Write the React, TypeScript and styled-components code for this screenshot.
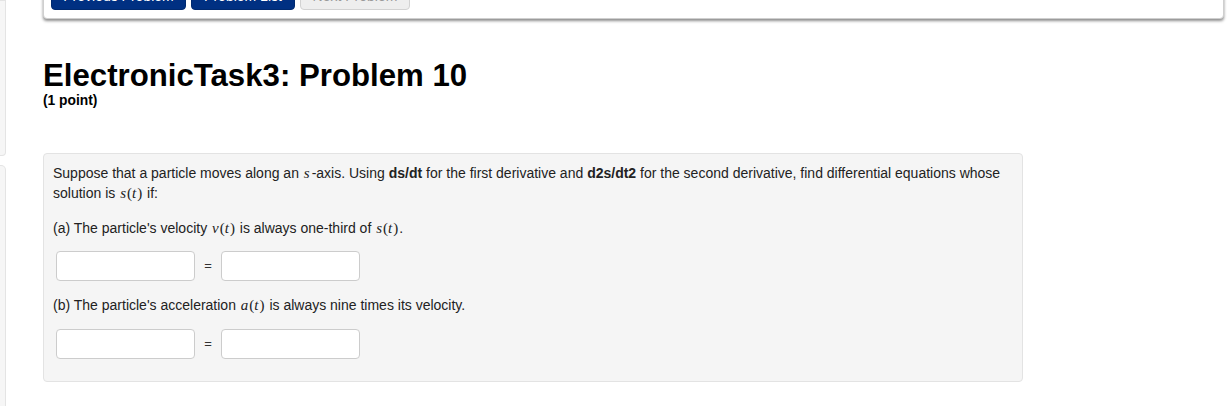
import React from 'react';
import styled, { createGlobalStyle } from 'styled-components';

const GlobalStyle = createGlobalStyle`
	html, body {
		margin: 0;
		padding: 0;
		background: #ffffff;
		overflow: hidden;
	}
	body {
		font-family: "Liberation Sans", Arial, Helvetica, sans-serif;
		color: #222222;
	}
`;

const Page = styled.div`
	display: flex;
	align-items: flex-start;
	width: 1229px;
	height: 406px;
	overflow: hidden;
`;

const Sidebar = styled.div`
	width: 6px;
	display: flex;
	flex-direction: column;
	gap: 9px;
	flex-shrink: 0;
`;

const SidePanel = styled.div<{ h: number; top?: boolean }>`
	height: ${({ h }) => `${h}px`};
	background: #f6f6f6;
	border: 1px solid #e4e4e4;
	border-left: none;
	border-radius: ${({ top }) => (top ? '0 0 4px 0' : '0 5px 0 0')};
	box-sizing: border-box;
`;

const Main = styled.div`
	margin-left: 37px;
	width: 1181px;
	flex-shrink: 0;
`;

const Nav = styled.div`
	margin-top: -30px;
	background: #ffffff;
	border: 1px solid #cfcfcf;
	border-radius: 4px;
	box-shadow: 0 2px 3px rgba(0, 0, 0, 0.45);
	padding: 9px 7px 8px;
	display: flex;
	gap: 5px;
`;

const NavButton = styled.button<{ w: number; disabled?: boolean }>`
	width: ${({ w }) => `${w}px`};
	height: 30px;
	border-radius: 4px;
	font-family: "Liberation Sans", Arial, sans-serif;
	font-size: 14px;
	line-height: 30px;
	padding: 0;
	background: ${({ disabled }) => (disabled ? '#eeeeee' : '#003082')};
	color: ${({ disabled }) => (disabled ? '#999999' : '#ffffff')};
	border: 1px solid ${({ disabled }) => (disabled ? '#d2d2d2' : '#002a70')};
`;

const Title = styled.h1`
	margin: 40px 0 0;
	font-size: 31.2px;
	line-height: 33px;
	font-weight: bold;
	color: #000000;
`;

const Points = styled.div`
	font-size: 13.8px;
	line-height: 18px;
	font-weight: bold;
	color: #000000;
`;

const ProblemBox = styled.div`
	margin-top: 43px;
	width: 980px;
	box-sizing: border-box;
	background: #f5f5f5;
	border: 1px solid #e3e3e3;
	border-radius: 4px;
	padding: 9px;
	font-size: 14px;
	line-height: 20px;
`;

const Para = styled.p<{ mt?: number }>`
	margin: ${({ mt }) => `${mt ?? 0}px`} 0 0;
`;

const Math = styled.span`
	font-family: "Liberation Serif", "Times New Roman", serif;
	font-size: 15px;
	line-height: 1;
	padding: 0 1px;
`;

const Var = styled.i`
	font-style: italic;
	padding-right: 1px;
`;

const Answer = styled.div<{ mt: number }>`
	display: flex;
	align-items: center;
	margin: ${({ mt }) => `${mt}px`} 0 0 3px;
`;

const Field = styled.input`
	width: 139px;
	height: 30px;
	box-sizing: border-box;
	border: 1px solid #cccccc;
	border-radius: 4px;
	background: #ffffff;
	padding: 4px 6px;
	font-size: 13px;
	outline: none;
`;

const Equals = styled.span`
	width: 26px;
	text-align: center;
	font-size: 13px;
	color: #333333;
`;

const Bottom = styled.div`
	height: 13px;
`;

function Fn({ name }: { name: string }) {
	return (
		<Math>
			<Var>{name}</Var>(<Var>t</Var>)
		</Math>
	);
}

export default function App() {
	return (
		<>
			<GlobalStyle />
			<Page>
				<Sidebar>
					<SidePanel h={156} top />
					<SidePanel h={260} />
				</Sidebar>
				<Main>
					<Nav>
						<NavButton w={135}>Previous Problem</NavButton>
						<NavButton w={104}>Problem List</NavButton>
						<NavButton w={110} disabled>Next Problem</NavButton>
					</Nav>
					<Title>ElectronicTask3: Problem 10</Title>
					<Points>(1 point)</Points>
					<ProblemBox>
						<Para>
							Suppose that a particle moves along an <Math><Var>s</Var></Math>-axis. Using <b>ds/dt</b> for the
							first derivative and <b>d2s/dt2</b> for the second derivative, find differential equations whose
							solution is <Fn name="s" /> if:
						</Para>
						<Para mt={15}>
							(a) The particle's velocity <Fn name="v" /> is always one-third of <Fn name="s" />.
						</Para>
						<Answer mt={13}>
							<Field />
							<Equals>=</Equals>
							<Field />
						</Answer>
						<Para mt={14}>
							(b) The particle's acceleration <Fn name="a" /> is always nine times its velocity.
						</Para>
						<Answer mt={14}>
							<Field />
							<Equals>=</Equals>
							<Field />
						</Answer>
						<Bottom />
					</ProblemBox>
				</Main>
			</Page>
		</>
	);
}
